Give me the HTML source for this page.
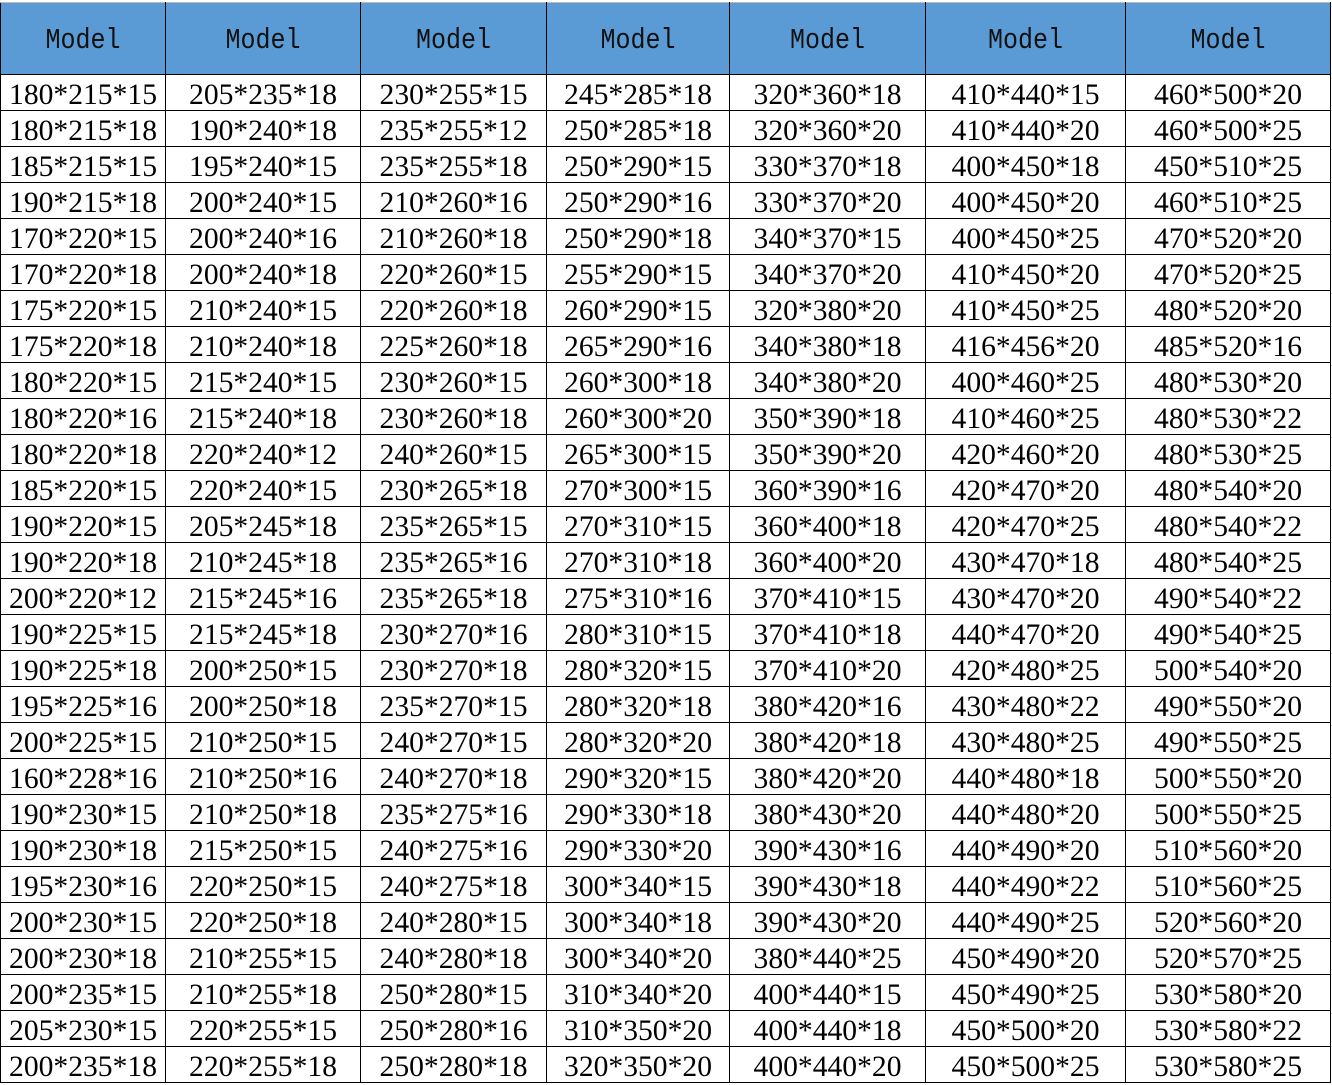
<!DOCTYPE html><html><head><style>
body{margin:0;background:#fff;width:1332px;height:1085px;overflow:hidden}
table{position:absolute;left:0;top:2px;border-collapse:collapse;table-layout:fixed;width:1331px}
td,th{border:1.5px solid #000;padding:0;text-align:center;white-space:nowrap;overflow:hidden}
th{background:#5b9bd5;font:normal 25px "Liberation Mono",monospace;color:#111;border-top:1px solid #bbb;padding-top:4px}
th span{display:inline-block;transform:scaleY(1.15)}
tr.h{height:72px}
tr{height:36px}
td{font:29.6px "Liberation Serif",serif;color:#000;line-height:30px;padding-top:5px}
</style></head><body><table>
<colgroup><col style="width:165px"><col style="width:195px"><col style="width:186px"><col style="width:183px"><col style="width:196px"><col style="width:200px"><col style="width:205px"></colgroup>
<tr class="h"><th><span>Model</span></th><th><span>Model</span></th><th><span>Model</span></th><th><span>Model</span></th><th><span>Model</span></th><th><span>Model</span></th><th><span>Model</span></th></tr>
<tr><td>180*215*15</td><td>205*235*18</td><td>230*255*15</td><td>245*285*18</td><td>320*360*18</td><td>410*440*15</td><td>460*500*20</td></tr>
<tr><td>180*215*18</td><td>190*240*18</td><td>235*255*12</td><td>250*285*18</td><td>320*360*20</td><td>410*440*20</td><td>460*500*25</td></tr>
<tr><td>185*215*15</td><td>195*240*15</td><td>235*255*18</td><td>250*290*15</td><td>330*370*18</td><td>400*450*18</td><td>450*510*25</td></tr>
<tr><td>190*215*18</td><td>200*240*15</td><td>210*260*16</td><td>250*290*16</td><td>330*370*20</td><td>400*450*20</td><td>460*510*25</td></tr>
<tr><td>170*220*15</td><td>200*240*16</td><td>210*260*18</td><td>250*290*18</td><td>340*370*15</td><td>400*450*25</td><td>470*520*20</td></tr>
<tr><td>170*220*18</td><td>200*240*18</td><td>220*260*15</td><td>255*290*15</td><td>340*370*20</td><td>410*450*20</td><td>470*520*25</td></tr>
<tr><td>175*220*15</td><td>210*240*15</td><td>220*260*18</td><td>260*290*15</td><td>320*380*20</td><td>410*450*25</td><td>480*520*20</td></tr>
<tr><td>175*220*18</td><td>210*240*18</td><td>225*260*18</td><td>265*290*16</td><td>340*380*18</td><td>416*456*20</td><td>485*520*16</td></tr>
<tr><td>180*220*15</td><td>215*240*15</td><td>230*260*15</td><td>260*300*18</td><td>340*380*20</td><td>400*460*25</td><td>480*530*20</td></tr>
<tr><td>180*220*16</td><td>215*240*18</td><td>230*260*18</td><td>260*300*20</td><td>350*390*18</td><td>410*460*25</td><td>480*530*22</td></tr>
<tr><td>180*220*18</td><td>220*240*12</td><td>240*260*15</td><td>265*300*15</td><td>350*390*20</td><td>420*460*20</td><td>480*530*25</td></tr>
<tr><td>185*220*15</td><td>220*240*15</td><td>230*265*18</td><td>270*300*15</td><td>360*390*16</td><td>420*470*20</td><td>480*540*20</td></tr>
<tr><td>190*220*15</td><td>205*245*18</td><td>235*265*15</td><td>270*310*15</td><td>360*400*18</td><td>420*470*25</td><td>480*540*22</td></tr>
<tr><td>190*220*18</td><td>210*245*18</td><td>235*265*16</td><td>270*310*18</td><td>360*400*20</td><td>430*470*18</td><td>480*540*25</td></tr>
<tr><td>200*220*12</td><td>215*245*16</td><td>235*265*18</td><td>275*310*16</td><td>370*410*15</td><td>430*470*20</td><td>490*540*22</td></tr>
<tr><td>190*225*15</td><td>215*245*18</td><td>230*270*16</td><td>280*310*15</td><td>370*410*18</td><td>440*470*20</td><td>490*540*25</td></tr>
<tr><td>190*225*18</td><td>200*250*15</td><td>230*270*18</td><td>280*320*15</td><td>370*410*20</td><td>420*480*25</td><td>500*540*20</td></tr>
<tr><td>195*225*16</td><td>200*250*18</td><td>235*270*15</td><td>280*320*18</td><td>380*420*16</td><td>430*480*22</td><td>490*550*20</td></tr>
<tr><td>200*225*15</td><td>210*250*15</td><td>240*270*15</td><td>280*320*20</td><td>380*420*18</td><td>430*480*25</td><td>490*550*25</td></tr>
<tr><td>160*228*16</td><td>210*250*16</td><td>240*270*18</td><td>290*320*15</td><td>380*420*20</td><td>440*480*18</td><td>500*550*20</td></tr>
<tr><td>190*230*15</td><td>210*250*18</td><td>235*275*16</td><td>290*330*18</td><td>380*430*20</td><td>440*480*20</td><td>500*550*25</td></tr>
<tr><td>190*230*18</td><td>215*250*15</td><td>240*275*16</td><td>290*330*20</td><td>390*430*16</td><td>440*490*20</td><td>510*560*20</td></tr>
<tr><td>195*230*16</td><td>220*250*15</td><td>240*275*18</td><td>300*340*15</td><td>390*430*18</td><td>440*490*22</td><td>510*560*25</td></tr>
<tr><td>200*230*15</td><td>220*250*18</td><td>240*280*15</td><td>300*340*18</td><td>390*430*20</td><td>440*490*25</td><td>520*560*20</td></tr>
<tr><td>200*230*18</td><td>210*255*15</td><td>240*280*18</td><td>300*340*20</td><td>380*440*25</td><td>450*490*20</td><td>520*570*25</td></tr>
<tr><td>200*235*15</td><td>210*255*18</td><td>250*280*15</td><td>310*340*20</td><td>400*440*15</td><td>450*490*25</td><td>530*580*20</td></tr>
<tr><td>205*230*15</td><td>220*255*15</td><td>250*280*16</td><td>310*350*20</td><td>400*440*18</td><td>450*500*20</td><td>530*580*22</td></tr>
<tr><td>200*235*18</td><td>220*255*18</td><td>250*280*18</td><td>320*350*20</td><td>400*440*20</td><td>450*500*25</td><td>530*580*25</td></tr>
</table></body></html>
